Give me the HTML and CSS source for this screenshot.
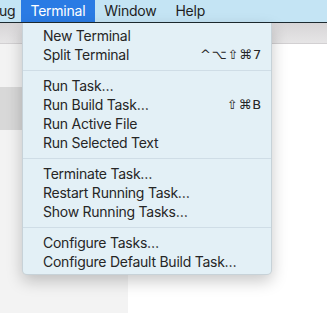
FILE: index.html
```html
<!DOCTYPE html>
<html lang="en">
<head>
    <meta charset="UTF-8">
    <title>Terminal menu</title>
    <link rel="stylesheet" href="styles.css">
</head>
<body>

    <div class="menubar">
        <span class="menubar-item cut">ug</span>
        <span class="menubar-item active">Terminal</span>
        <span class="menubar-item">Window</span>
        <span class="menubar-item">Help</span>
    </div>

    <div class="window">
        <div class="titlebar"></div>
        <div class="workspace">
            <aside class="sidebar">
                <div class="sidebar-gap"></div>
                <div class="sidebar-row selected"></div>
            </aside>
            <div class="editor"></div>
        </div>
    </div>

    <!-- Dropdown of the Terminal menu -->
    <ul class="dropdown">
        <li class="item"><span>New Terminal</span></li>
        <li class="item"><span>Split Terminal</span><span class="keys">^⌥⇧⌘7</span></li>
        <li class="sep"></li>
        <li class="item"><span>Run Task…</span></li>
        <li class="item"><span>Run Build Task…</span><span class="keys">⇧⌘B</span></li>
        <li class="item"><span>Run Active File</span></li>
        <li class="item"><span>Run Selected Text</span></li>
        <li class="sep"></li>
        <li class="item"><span>Terminate Task…</span></li>
        <li class="item"><span>Restart Running Task…</span></li>
        <li class="item"><span>Show Running Tasks…</span></li>
        <li class="sep"></li>
        <li class="item"><span>Configure Tasks…</span></li>
        <li class="item"><span>Configure Default Build Task…</span></li>
    </ul>

</body>
</html>
```

FILE: styles.css
```css
* {
    margin: 0;
    padding: 0;
    box-sizing: border-box;
}

body {
    font-family: 'Inter', 'Liberation Sans', sans-serif;
    font-size: 14px;
    letter-spacing: -0.25px;
    color: #262626;
    background-color: #ffffff;
    height: 313px;
    overflow: hidden;
    position: relative;
}

/* Menu bar */
.menubar {
    display: flex;
    height: 23px;
    background-color: #c4e4f4;
    border-bottom: 1px solid #1d2a30;
}

.menubar-item {
    padding: 0 9.5px;
    line-height: 22px;
    color: #1e1e1e;
}

.menubar-item.cut {
    width: 22px;
    padding: 0;
    margin-left: -1px;
}

.menubar-item.active {
    background-color: #2a7be4;
    color: #ffffff;
}

/* Window behind the menu */
.window {
    display: flex;
    flex-direction: column;
    height: 290px;
}

.titlebar {
    height: 21px;
    background: linear-gradient(#d7d5d7, #e6e5e6);
    border-bottom: 1px solid #d2d0d2;
}

.workspace {
    flex: 1;
    display: flex;
}

.sidebar {
    width: 128px;
    background-color: #f3f3f3;
}

.sidebar-gap {
    height: 43px;
}

.sidebar-row.selected {
    height: 43px;
    background-color: #d8d8d8;
}

.editor {
    flex: 1;
    background-color: #ffffff;
}

/* Dropdown */
.dropdown {
    position: absolute;
    left: 22px;
    top: 23px;
    width: 250px;
    list-style: none;
    padding: 3px 0 3px;
    background-color: #e3f0f6;
    border: 1px solid rgba(0, 0, 0, 0.12);
    border-top: none;
    border-radius: 0 0 5px 5px;
    box-shadow: 0 6px 16px rgba(0, 0, 0, 0.22);
}

.item {
    display: flex;
    justify-content: space-between;
    height: 19px;
    line-height: 19px;
    padding: 0 9px 0 20px;
}

.keys {
    font-family: 'DejaVu Sans', sans-serif;
    font-size: 13px;
    letter-spacing: 0.8px;
}

.sep {
    height: 12px;
    display: flex;
    align-items: center;
}

.sep::after {
    content: "";
    display: block;
    width: 100%;
    height: 1px;
    background-color: #cfdde6;
}
```
